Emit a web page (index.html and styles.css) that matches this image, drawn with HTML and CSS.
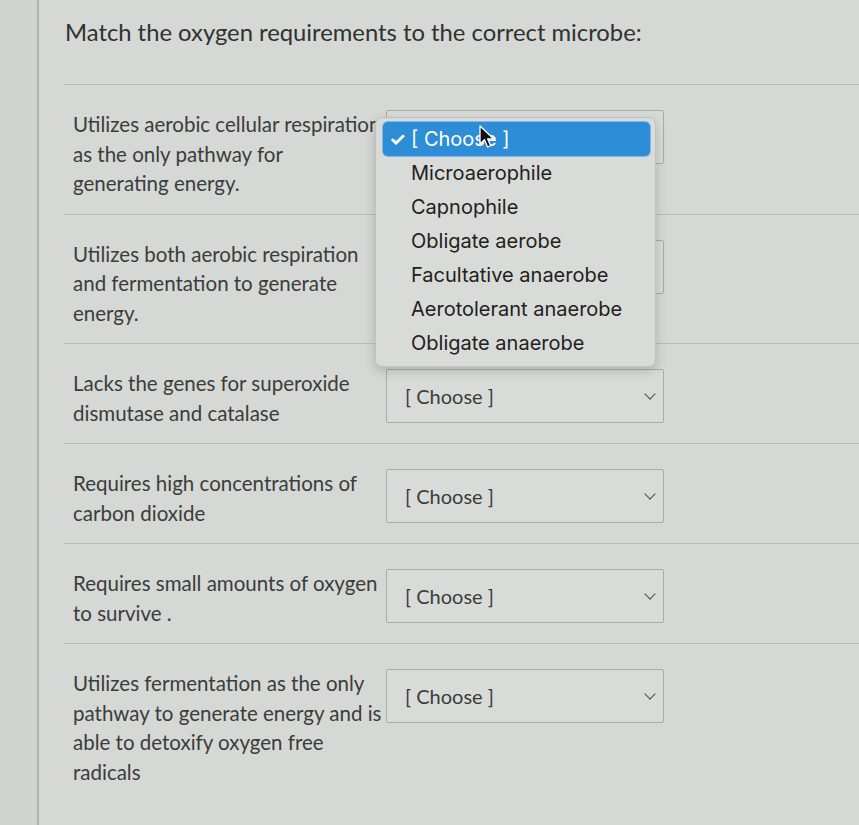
FILE: index.html
```html
<!DOCTYPE html>
<html>
<head>
<meta charset="utf-8">
<link rel="stylesheet" href="styles.css">
</head>
<body>
<div class="page">
  <div class="gutter"></div>
  <div class="content">
    <h1 class="title">Match the oxygen requirements to the correct microbe:</h1>
    <div class="rows">
      <div class="row">
        <div class="prompt">Utilizes aerobic cellular respiration as the only pathway for generating energy.</div>
        <div class="select-wrap">
          <div class="select open"><span class="chev small"></span></div>
          <div class="menu">
            <div class="item selected"><span class="check">✓</span><span class="label">[ Choose ]</span>
              <svg class="cursor" width="16" height="24" viewBox="0 0 16 24"><path d="M1 1 L1 19 L5.5 14.8 L8.6 22 L11.6 20.7 L8.6 13.8 L14.5 13.8 Z" fill="#111" stroke="#fff" stroke-width="1.3" stroke-linejoin="round"/></svg>
            </div>
            <div class="item"><span class="label">Microaerophile</span></div>
            <div class="item"><span class="label">Capnophile</span></div>
            <div class="item"><span class="label">Obligate aerobe</span></div>
            <div class="item"><span class="label">Facultative anaerobe</span></div>
            <div class="item"><span class="label">Aerotolerant anaerobe</span></div>
            <div class="item"><span class="label">Obligate anaerobe</span></div>
          </div>
        </div>
      </div>
      <div class="row">
        <div class="prompt">Utilizes both aerobic respiration and fermentation to generate energy.</div>
        <div class="select-wrap"><div class="select"><span class="chev small"></span></div></div>
      </div>
      <div class="row">
        <div class="prompt">Lacks the genes for superoxide dismutase and catalase</div>
        <div class="select-wrap"><div class="select"><span class="value">[ Choose ]</span><span class="chev"></span></div></div>
      </div>
      <div class="row">
        <div class="prompt">Requires high concentrations of carbon dioxide</div>
        <div class="select-wrap"><div class="select"><span class="value">[ Choose ]</span><span class="chev"></span></div></div>
      </div>
      <div class="row">
        <div class="prompt">Requires small amounts of oxygen to survive .</div>
        <div class="select-wrap"><div class="select"><span class="value">[ Choose ]</span><span class="chev"></span></div></div>
      </div>
      <div class="row last">
        <div class="prompt">Utilizes fermentation as the only pathway to generate energy and is able to detoxify oxygen free radicals</div>
        <div class="select-wrap"><div class="select"><span class="value">[ Choose ]</span><span class="chev"></span></div></div>
      </div>
    </div>
  </div>
</div>
</body>
</html>
```

FILE: styles.css
```css
html, body {
  margin: 0;
  padding: 0;
  height: 100%;
}
body {
  background: #d3d6d2;
  font-family: Lato, "Open Sans", sans-serif;
  color: #3a3d3c;
  overflow: hidden;
}
.page {
  display: flex;
  min-height: 825px;
}
.gutter {
  width: 37px;
  flex: none;
  background: #d0d3cf;
  border-right: 2px solid #aeb1ad;
}
.content {
  flex: 1;
  padding-left: 25px;
  background: #d5d8d4;
}
.title {
  margin: 0;
  padding: 17px 0 37px 1px;
  font-size: 23.8px;
  font-weight: 400;
  line-height: 30px;
  color: #2f3231;
  border-bottom: 1px solid #b9bcb8;
}
.row {
  display: flex;
  align-items: flex-start;
  padding: 25px 0 15px 9px;
  border-bottom: 1px solid #b9bcb8;
}
.row.last {
  border-bottom: none;
}
.prompt {
  width: 310px;
  margin-right: 3px;
  flex: none;
  font-size: 20.5px;
  line-height: 29.5px;
  color: #3a3d3c;
}
.select-wrap {
  position: relative;
  margin-left: 0;
}
.select {
  box-sizing: border-box;
  width: 278px;
  height: 54px;
  border: 1px solid #a9aca8;
  border-radius: 2px;
  background: #d8dbd7;
  display: flex;
  align-items: center;
  padding-left: 18px;
  position: relative;
}
.value {
  font-size: 20px;
  color: #3a3d3c;
}
.chev {
  position: absolute;
  right: 9px;
  top: 50%;
  width: 7px;
  height: 7px;
  margin-top: -6px;
  border-right: 1.6px solid #4a4d4c;
  border-bottom: 1.6px solid #4a4d4c;
  transform: rotate(45deg);
}
.menu {
  position: absolute;
  left: -11px;
  top: 7px;
  width: 281px;
  box-sizing: border-box;
  padding: 4px 5px 6px 7px;
  background: #d9dbd8;
  border: 1px solid #c0c2bf;
  border-radius: 7px;
  box-shadow: 0 4px 12px rgba(0,0,0,0.18);
  font-family: Inter, "Liberation Sans", sans-serif;
  z-index: 5;
}
.item {
  position: relative;
  height: 34px;
  display: flex;
  align-items: center;
  padding-left: 28px;
  font-size: 20px;
  color: #1f2120;
  border-radius: 5px;
}
.item.selected {
  background: #2d8dd6;
  color: #fff;
  box-shadow: 0 0 0 1px #7fb8e6;
}
.check {
  position: absolute;
  left: 6px;
  font-size: 19px;
  font-weight: 700;
}
.cursor {
  position: absolute;
  left: 96px;
  top: 3px;
}
```
